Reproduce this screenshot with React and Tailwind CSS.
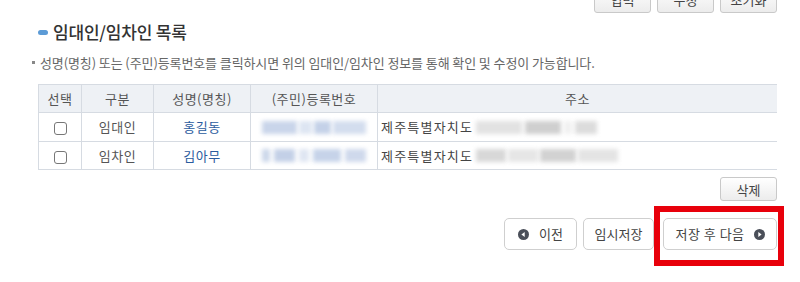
import React from "react";

const rows = [
  { type: "임대인", name: "홍길동" },
  { type: "임차인", name: "김아무" },
];

function CircleArrow({ dir = "right" }) {
  return (
    <svg width="11" height="11" viewBox="0 0 11 11" className="shrink-0">
      <circle cx="5.5" cy="5.5" r="5.5" fill="#4a4f59" />
      {dir === "right" ? (
        <path d="M4.3 3 L7.6 5.5 L4.3 8 Z" fill="#fff" />
      ) : (
        <path d="M6.7 3 L3.4 5.5 L6.7 8 Z" fill="#fff" />
      )}
    </svg>
  );
}

function Blur({ className }) {
  return <div className={`h-[13px] blur-[2px] ${className}`} />;
}

export default function App() {
  return (
    <div
      className="w-[800px] h-[282px] bg-white overflow-hidden text-[#333]"
      style={{ fontFamily: '"Noto Sans CJK KR", "Noto Sans", sans-serif' }}
    >
      {/* top action buttons, cut off by the frame */}
      <div className="flex justify-end gap-[6px] pr-[23px] -mt-[14px]">
        {["입력", "수정", "초기화"].map((t) => (
          <button
            key={t}
            className="h-[27px] w-[57px] rounded-[3px] border border-[#c9c9c9] bg-gradient-to-b from-white to-[#ececec] text-[13px] text-[#444] leading-none"
          >
            {t}
          </button>
        ))}
      </div>

      <div className="pl-[38px] w-[777px]">
        <div className="flex items-center gap-[5px] mt-[6px] h-[26px]">
          <span className="w-[10px] h-[5px] rounded-full bg-[#5c9bd6]" />
          <h2 className="text-[17px] font-medium text-[#333] tracking-[-0.2px]">임대인/임차인 목록</h2>
        </div>

        <p className="flex items-center gap-[5px] -ml-[6px] mt-[11px] text-[13px] text-[#666] tracking-[-0.1px] leading-none">
          <span className="w-[3px] h-[3px] bg-[#888]" />
          성명(명칭) 또는 (주민)등록번호를 클릭하시면 위의 임대인/임차인 정보를 통해 확인 및 수정이 가능합니다.
        </p>

        <table className="mt-[15px] w-[739px] border-collapse table-fixed text-[13px]">
          <colgroup>
            <col className="w-[43px]" />
            <col className="w-[72px]" />
            <col className="w-[97px]" />
            <col className="w-[127px]" />
            <col />
          </colgroup>
          <thead>
            <tr className="h-[28px] bg-[#eef1f5] text-[#555]">
              {["선택", "구분", "성명(명칭)", "(주민)등록번호", "주소"].map((h) => (
                <th key={h} className="font-normal tracking-[0.5px] border border-[#d6dbe2] border-l-0 first:border-l last:border-r-0">
                  {h}
                </th>
              ))}
            </tr>
          </thead>
          <tbody>
            {rows.map((r, i) => (
              <tr key={r.name} className={i === 0 ? "h-[29px]" : "h-[28px]"}>
                <td className="border-b border-r border-l border-[#d6dbe2] text-center">
                  <span className="inline-block align-middle w-[13px] h-[13px] rounded-[3px] border border-[#777] bg-white" />
                </td>
                <td className="border-b border-r border-[#d6dbe2] text-center text-[#555] tracking-[0.5px]">{r.type}</td>
                <td className="border-b border-r border-[#d6dbe2] text-center text-[#2b5c9e] tracking-[0.5px]">{r.name}</td>
                <td className="border-b border-r border-[#d6dbe2] px-[11px]">
                  {i === 0 ? (
                    <div className="flex items-center gap-[2px]">
                      <Blur className="w-[36px] bg-[#c9d5ea]" />
                      <Blur className="w-[14px] bg-[#dde5f2]" />
                      <Blur className="w-[18px] bg-[#c4d1e8]" />
                      <Blur className="w-[34px] bg-[#d3ddee]" />
                    </div>
                  ) : (
                    <div className="flex items-center gap-[4px]">
                      <Blur className="w-[8px] bg-[#ccd7ea]" />
                      <Blur className="w-[22px] bg-[#c3d0e7]" />
                      <Blur className="w-[10px] bg-[#dfe6f2]" />
                      <Blur className="w-[28px] bg-[#c6d3e9]" />
                      <Blur className="w-[22px] bg-[#cfd9ec]" />
                    </div>
                  )}
                </td>
                <td className="border-b border-[#d6dbe2] pl-[3px]">
                  <div className="flex items-center gap-[3px] text-[#444]">
                    <span className="tracking-[1.2px]">제주특별자치도</span>
                    {i === 0 ? (
                      <div className="flex items-center gap-[3px]">
                        <Blur className="w-[46px] bg-[#e2e2e2]" />
                        <Blur className="w-[36px] bg-[#cfcfcf]" />
                        <Blur className="w-[8px] bg-[#f0f0f0]" />
                        <Blur className="w-[22px] bg-[#dcdcdc]" />
                      </div>
                    ) : (
                      <div className="flex items-center gap-[2px]">
                        <Blur className="w-[30px] bg-[#d8d8d8]" />
                        <Blur className="w-[30px] bg-[#e6e6e6]" />
                        <Blur className="w-[36px] bg-[#d2d2d2]" />
                        <Blur className="w-[40px] bg-[#e4e4e4]" />
                      </div>
                    )}
                  </div>
                </td>
              </tr>
            ))}
          </tbody>
        </table>

        <div className="flex justify-end mt-[7px]">
          <button className="h-[24px] w-[57px] rounded-[3px] border border-[#c9c9c9] bg-gradient-to-b from-white to-[#ececec] text-[13px] text-[#444] leading-none">
            삭제
          </button>
        </div>

        <div className="flex justify-end items-center mt-[17px]">
          <button className="h-[32px] w-[73px] mr-[6px] flex items-center justify-center gap-[10px] rounded-[5px] border border-[#cfcfcf] bg-white text-[13px] text-[#444]">
            <CircleArrow dir="left" />
            이전
          </button>
          <button className="h-[32px] w-[71px] mr-[9px] flex items-center justify-center rounded-[5px] border border-[#cfcfcf] bg-white text-[13px] text-[#444]">
            임시저장
          </button>
          <div className="relative">
            <button className="h-[32px] w-[114px] flex items-center justify-center gap-[9px] rounded-[5px] border border-[#cfcfcf] bg-white text-[13px] text-[#444] tracking-[0.5px]">
              저장 후 다음
              <CircleArrow dir="right" />
            </button>
            <div className="absolute -left-[9px] -right-[7px] -top-[12px] -bottom-[16px] border-[6px] border-[#e8000b] pointer-events-none" />
          </div>
        </div>
      </div>
    </div>
  );
}
